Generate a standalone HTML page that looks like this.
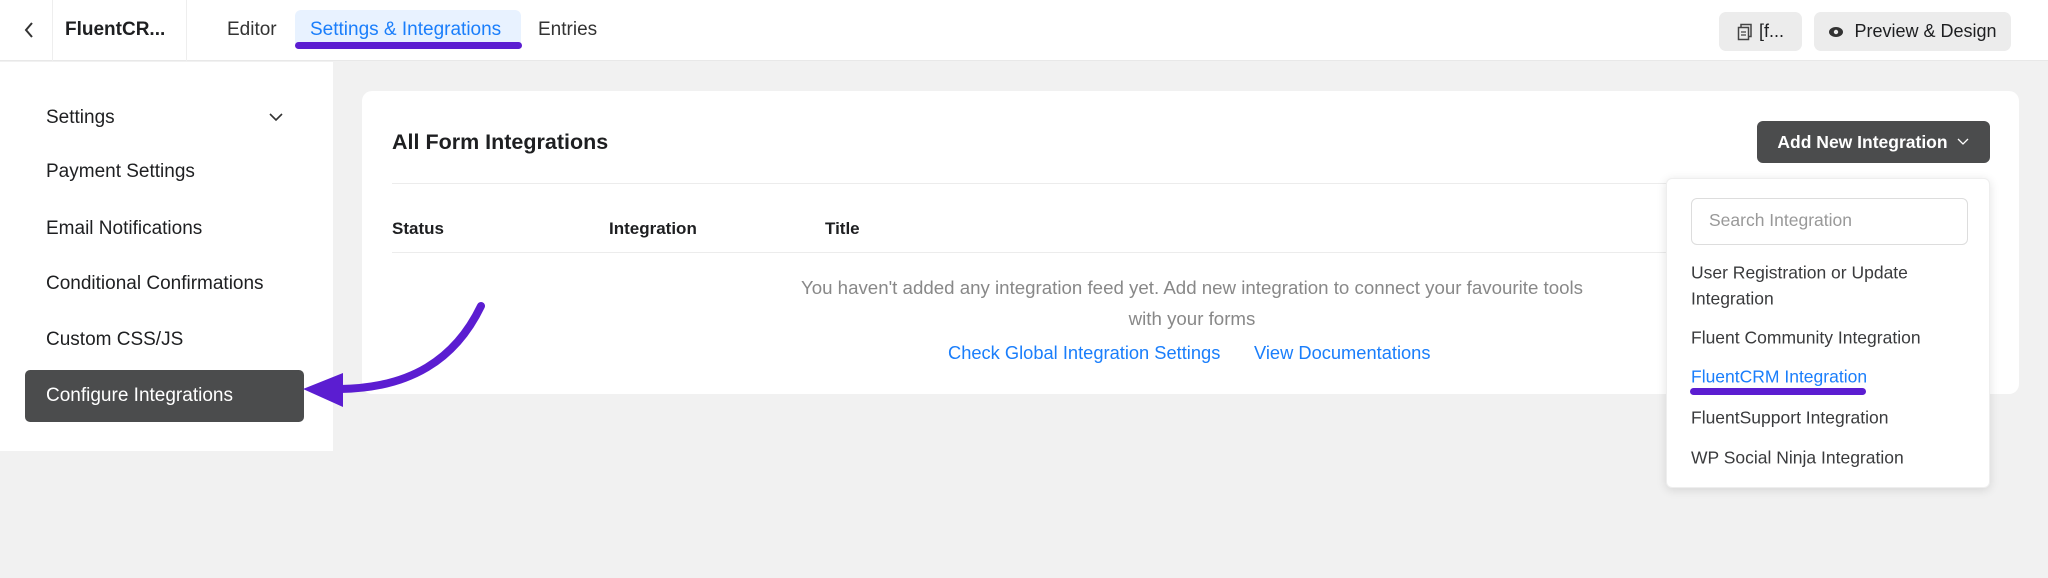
<!DOCTYPE html>
<html><head><meta charset="utf-8"><style>
*{box-sizing:border-box;margin:0;padding:0}
body{width:2048px;height:578px;background:#f1f1f1;font-family:"Liberation Sans",sans-serif;color:#1e1f21;position:relative;overflow:hidden}
.a{position:absolute;white-space:nowrap}
.top{position:absolute;left:0;top:0;width:2048px;height:61px;background:#fff;border-bottom:1px solid #e8e8e8}
.side{position:absolute;left:0;top:62px;width:333px;height:389px;background:#fff}
.si{position:absolute;left:46px;font-size:19px;color:#1e1f21;transform:translateY(-50%)}
.card{position:absolute;left:362px;top:91px;width:1657px;height:303px;background:#fff;border-radius:10px}
.btn{position:absolute;background:#ececec;border-radius:7px;font-size:18px;color:#1e1f21;display:flex;align-items:center;justify-content:center}
.dd{position:absolute;left:1666px;top:178px;width:324px;height:310px;background:#fff;border-radius:6px;box-shadow:0 2px 10px rgba(0,0,0,.12);border:1px solid #eee}
.di{position:absolute;left:24px;font-size:17.5px;color:#3a3b3d;transform:translateY(-50%)}
</style></head><body>
<div class="top"></div>
<div class="a" style="left:52px;top:0;width:1px;height:61px;background:#eee"></div>
<div class="a" style="left:186px;top:0;width:1px;height:61px;background:#eee"></div>
<svg class="a" style="left:22px;top:20px" width="14" height="20"><path d="M10 3 L4 10 L10 17" stroke="#333" stroke-width="2" fill="none"/></svg>
<div class="a" style="left:65px;top:19px;font-size:19px;font-weight:600">FluentCR...</div>
<div class="a" style="left:227px;top:19px;font-size:19px;color:#333">Editor</div>
<div class="a" style="left:295px;top:10px;width:226px;height:38px;background:#e8f2ff;border-radius:6px"></div>
<div class="a" style="left:310px;top:19px;font-size:19px;color:#1a7efb">Settings &amp; Integrations</div>
<div class="a" style="left:295px;top:42px;width:227px;height:7px;background:#5b1dd1;border-radius:4px"></div>
<div class="a" style="left:538px;top:19px;font-size:19px;color:#333">Entries</div>
<div class="btn" style="left:1719px;top:12px;width:83px;height:39px">
<svg width="16" height="18" style="margin-right:6px"><rect x="4" y="1.5" width="10" height="12" fill="none" stroke="#444" stroke-width="1.5"/><rect x="1.5" y="4.5" width="10" height="12" fill="#ececec" stroke="#444" stroke-width="1.5"/><path d="M4 9h5M4 12h5" stroke="#444" stroke-width="1.3"/></svg>[f...</div>
<div class="btn" style="left:1814px;top:12px;width:197px;height:39px">
<svg width="16" height="12" style="margin-right:10px"><ellipse cx="8" cy="6" rx="7" ry="5" fill="#333"/><circle cx="8" cy="6" r="2.2" fill="#ececec"/></svg>Preview &amp; Design</div>
<div class="side"></div>
<div class="si" style="top:118px">Settings</div>
<svg class="a" style="left:268px;top:111px" width="16" height="12"><path d="M2 3 L8 9 L14 3" stroke="#333" stroke-width="1.6" fill="none"/></svg>
<div class="si" style="top:172px">Payment Settings</div>
<div class="si" style="top:229px">Email Notifications</div>
<div class="si" style="top:284px">Conditional Confirmations</div>
<div class="si" style="top:340px">Custom CSS/JS</div>
<div class="a" style="left:25px;top:370px;width:279px;height:52px;background:#4b4c4d;border-radius:5px"></div>
<div class="si" style="top:396px;color:#fff">Configure Integrations</div>
<div class="card"></div>
<div class="a" style="left:392px;top:130px;font-size:21.5px;font-weight:600">All Form Integrations</div>
<div class="a" style="left:392px;top:183px;width:1598px;height:1px;background:#ececec"></div>
<div class="a" style="left:392px;top:219px;font-size:17px;font-weight:600">Status</div>
<div class="a" style="left:609px;top:219px;font-size:17px;font-weight:600">Integration</div>
<div class="a" style="left:825px;top:219px;font-size:17px;font-weight:600">Title</div>
<div class="a" style="left:392px;top:252px;width:1598px;height:1px;background:#ececec"></div>
<div class="a" style="left:692px;top:272px;width:1000px;text-align:center;font-size:18.7px;color:#888;line-height:31px;white-space:normal">You haven't added any integration feed yet. Add new integration to connect your favourite tools<br>with your forms</div>
<div class="a" style="left:948px;top:342px;font-size:18.3px;color:#1a7efb">Check Global Integration Settings</div>
<div class="a" style="left:1254px;top:342px;font-size:18.3px;color:#1a7efb">View Documentations</div>
<div class="a" style="left:1757px;top:121px;width:233px;height:42px;background:#4b4c4d;border-radius:6px;color:#fff;font-size:17.5px;font-weight:600;display:flex;align-items:center;justify-content:center">Add New Integration <svg width="14" height="10" style="margin-left:8px"><path d="M2 2 L7 7 L12 2" stroke="#fff" stroke-width="1.3" fill="none"/></svg></div>
<div class="dd">
<div class="a" style="left:24px;top:19px;width:277px;height:47px;border:1px solid #ddd;border-radius:6px"></div>
<div class="a" style="left:42px;top:31px;font-size:17.5px;color:#999">Search Integration</div>
<div class="di" style="top:94px">User Registration or Update</div>
<div class="di" style="top:120px">Integration</div>
<div class="di" style="top:159px">Fluent Community Integration</div>
<div class="di" style="top:198px;color:#1a7efb">FluentCRM Integration</div>
<div class="a" style="left:23px;top:209px;width:176px;height:7px;background:#5b1dd1;border-radius:4px"></div>
<div class="di" style="top:239px">FluentSupport Integration</div>
<div class="di" style="top:279px">WP Social Ninja Integration</div>
</div>
<svg class="a" style="left:0;top:0" width="2048" height="578">
<path d="M481 306 C455 360 410 388 340 389" stroke="#5b1dd1" stroke-width="8" stroke-linecap="round" fill="none"/>
<path d="M303 389 L343 373 L343 407 Z" fill="#5b1dd1"/>
</svg>
</body></html>
